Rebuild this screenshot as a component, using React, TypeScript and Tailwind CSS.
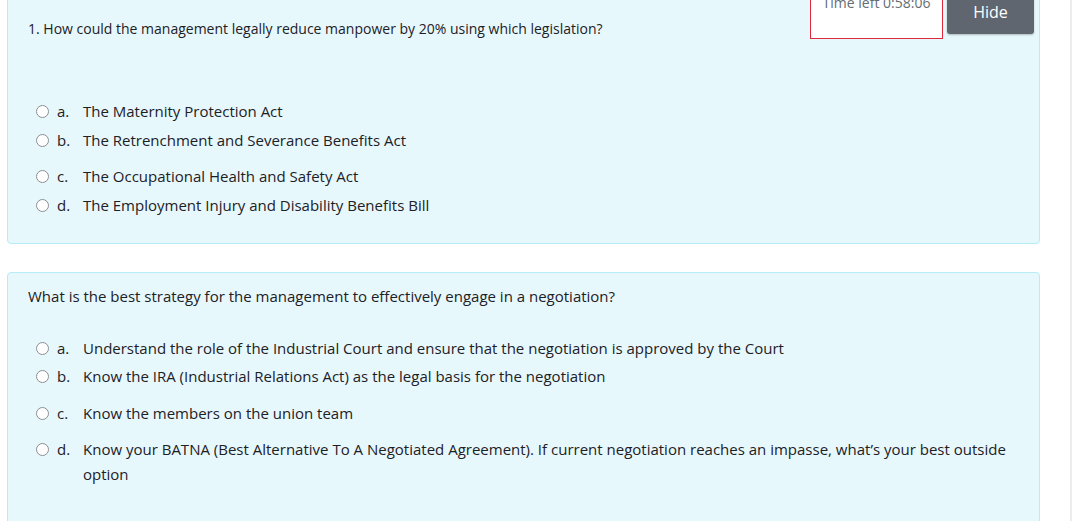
import React from 'react';

type Opt = { letter: string; text: React.ReactNode; mt: string };

const q1: Opt[] = [
  { letter: 'a.', text: 'The Maternity Protection Act', mt: 'mt-0' },
  { letter: 'b.', text: 'The Retrenchment and Severance Benefits Act', mt: 'mt-[8px]' },
  { letter: 'c.', text: 'The Occupational Health and Safety Act', mt: 'mt-[15px]' },
  { letter: 'd.', text: 'The Employment Injury and Disability Benefits Bill', mt: 'mt-[8px]' },
];

const q2: Opt[] = [
  { letter: 'a.', text: 'Understand the role of the Industrial Court and ensure that the negotiation is approved by the Court', mt: 'mt-0' },
  { letter: 'b.', text: 'Know the IRA (Industrial Relations Act) as the legal basis for the negotiation', mt: 'mt-[7px]' },
  { letter: 'c.', text: 'Know the members on the union team', mt: 'mt-[16px]' },
  {
    letter: 'd.',
    text: "Know your BATNA (Best Alternative To A Negotiated Agreement). If current negotiation reaches an impasse, what’s your best outside option",
    mt: 'mt-[15px]',
  },
];

function Radio() {
  return (
    <span className="mt-[4px] inline-block h-[13px] w-[13px] shrink-0 rounded-full border border-[#8a8f94] bg-white" />
  );
}

function Options({ items }: { items: Opt[] }) {
  return (
    <div className="flex flex-col text-[15px]">
      {items.map((o) => (
        <label key={o.letter} className={`flex items-start ${o.mt}`}>
          <Radio />
          <span className="ml-[8px] w-[26px] shrink-0">{o.letter}</span>
          <span className="-my-[2px] leading-[25px]">{o.text}</span>
        </label>
      ))}
    </div>
  );
}

export default function App() {
  return (
    <div
      className="relative flex h-[521px] w-[1072px] overflow-hidden bg-white text-[14px] leading-[21px] text-[#1d2125]"
      style={{ fontFamily: '"Open Sans", "Noto Sans", sans-serif' }}
    >
      <div className="w-[1070px] px-[7px]">
        {/* question 1 */}
        <div className="relative -mt-[2px] w-[1033px] rounded-b-[4px] border border-[#b6ecf5] bg-[#e7f8fd] pb-[27px] pl-[20px] pr-[20px] pt-[19px]">
          <p>1. How could the management legally reduce manpower by 20% using which legislation?</p>
          <div className="mt-[62px] pl-[8px]">
            <Options items={q1} />
          </div>

          <div className="absolute right-[5px] top-0 flex items-start gap-[4px]">
            <div className="flex h-[40px] w-[133px] justify-center border border-[#e0283c] bg-white text-[14px] leading-[14px] text-[#646c74]">
              <span className="-mt-[4px]">Time left 0:58:06</span>
            </div>
            <button className="h-[35px] w-[87px] rounded-b-[3px] bg-[#5f6670] pb-[9px] text-[16px] text-white shadow-[0_1px_2px_rgba(0,0,0,0.25)]">
              Hide
            </button>
          </div>
        </div>

        {/* question 2 */}
        <div className="mt-[28px] h-[260px] w-[1033px] rounded-[4px] border border-[#b6ecf5] bg-[#e7f8fd] pl-[20px] pr-[20px] pt-[13px] text-[15px]">
          <p>What is the best strategy for the management to effectively engage in a negotiation?</p>
          <div className="mt-[31px] pl-[8px]">
            <Options items={q2} />
          </div>
        </div>
      </div>
      <div className="w-[2px] bg-[#ececec]" />
    </div>
  );
}
